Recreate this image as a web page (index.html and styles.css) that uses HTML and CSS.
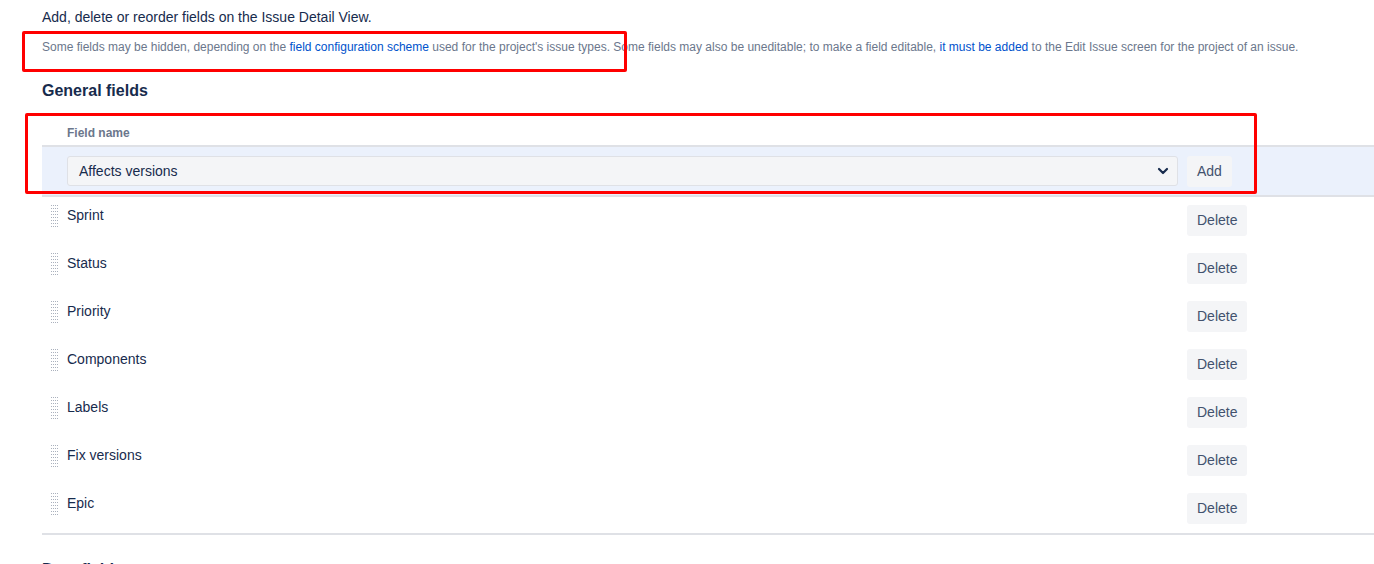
FILE: index.html
```html
<!DOCTYPE html>
<html>
<head>
<meta charset="utf-8">
<link rel="stylesheet" href="styles.css">
</head>
<body>
<div class="page">
  <p class="intro">Add, delete or reorder fields on the Issue Detail View.</p>
  <p class="note">Some fields may be hidden, depending on the <a href="#">field configuration scheme</a> used for the project's issue types. Some fields may also be uneditable; to make a field editable, <a href="#">it must be added</a> to the Edit Issue screen for the project of an issue.</p>
  <h3 class="section">General fields</h3>
  <div class="fields">
    <div class="row head">
      <div></div>
      <div class="th">Field name</div>
      <div></div>
    </div>
    <div class="row add">
      <div></div>
      <div class="select">
        <span>Affects versions</span>
        <svg class="chev" width="12" height="8" viewBox="0 0 12 8"><path d="M2 2 L6 6 L10 2" fill="none" stroke="#172b4d" stroke-width="2.2" stroke-linecap="round" stroke-linejoin="round"/></svg>
      </div>
      <div class="act"><button class="btn">Add</button></div>
    </div>
    <div class="row item"><div class="grip"></div><div class="name">Sprint</div><div class="act"><button class="btn">Delete</button></div></div>
    <div class="row item"><div class="grip"></div><div class="name">Status</div><div class="act"><button class="btn">Delete</button></div></div>
    <div class="row item"><div class="grip"></div><div class="name">Priority</div><div class="act"><button class="btn">Delete</button></div></div>
    <div class="row item"><div class="grip"></div><div class="name">Components</div><div class="act"><button class="btn">Delete</button></div></div>
    <div class="row item"><div class="grip"></div><div class="name">Labels</div><div class="act"><button class="btn">Delete</button></div></div>
    <div class="row item"><div class="grip"></div><div class="name">Fix versions</div><div class="act"><button class="btn">Delete</button></div></div>
    <div class="row item last"><div class="grip"></div><div class="name">Epic</div><div class="act"><button class="btn">Delete</button></div></div>
  </div>
  <h3 class="section next">Date fields</h3>
</div>
<div class="mark mark-note"></div>
<div class="mark mark-add"></div>
</body>
</html>
```
FILE: styles.css
```css
html, body {
  margin: 0;
  padding: 0;
  background: #fff;
  overflow: hidden;
}
body {
  font-family: "Liberation Sans", Arial, sans-serif;
  color: #172b4d;
  position: relative;
  width: 1374px;
  height: 564px;
}
.page {
  padding: 7px 0 0 42px;
}
.intro {
  margin: 0;
  font-size: 14px;
  line-height: 20px;
  color: #172b4d;
}
.note {
  margin: 12px 0 0;
  font-size: 12px;
  line-height: 16px;
  color: #6b778c;
  white-space: nowrap;
}
.note a {
  color: #0052cc;
  text-decoration: none;
}
.section {
  margin: 26px 0 0;
  font-size: 16px;
  line-height: 20px;
  font-weight: bold;
  color: #172b4d;
}
.fields {
  margin-top: 14px;
}
.row {
  display: grid;
  grid-template-columns: 25px 1fr 196px;
}
.row.head {
  padding: 10px 0 4px;
  border-bottom: 2px solid #dfe1e6;
}
.th {
  font-size: 12px;
  line-height: 16px;
  font-weight: bold;
  color: #6b778c;
}
.row.add {
  background: #ebf1fc;
  height: 48px;
  align-items: center;
  border-bottom: 2px solid #dfe1e6;
}
.select {
  height: 30px;
  box-sizing: border-box;
  background: #f4f5f7;
  border: 1px solid #dfe1e6;
  border-radius: 3px;
  display: flex;
  align-items: center;
  justify-content: space-between;
  padding: 0 8px 0 11px;
  font-size: 14px;
  color: #172b4d;
}
.chev { display: block; }
.act {
  display: flex;
  align-items: flex-start;
  padding-left: 9px;
}
.row.add .act { align-items: center; }
.btn {
  font-family: inherit;
  font-size: 14px;
  color: #42526e;
  background: #f4f5f7;
  border: 0;
  border-radius: 3px;
  height: 31px;
  padding: 0 10px;
  line-height: 31px;
  cursor: pointer;
}
.row.item {
  height: 48px;
  box-sizing: border-box;
  padding-top: 8px;
}
.row.item.last {
  border-bottom: 2px solid #dfe1e6;
  height: 50px;
}
.name {
  font-size: 14px;
  line-height: 20px;
  color: #172b4d;
}
.grip {
  width: 8px;
  height: 24px;
  margin-left: 9px;
  background-image: radial-gradient(circle at 0.5px 0.5px, #aab1bd 0.6px, transparent 0.7px);
  background-size: 2px 3px;
}
.next {
  margin-top: 25px;
}
.mark {
  position: absolute;
  border: 3px solid #ff0000;
  border-radius: 2px;
  box-sizing: border-box;
  pointer-events: none;
}
.mark-note {
  left: 22px;
  top: 31px;
  width: 605px;
  height: 41px;
}
.mark-add {
  left: 25px;
  top: 113px;
  width: 1232px;
  height: 81px;
}
```
